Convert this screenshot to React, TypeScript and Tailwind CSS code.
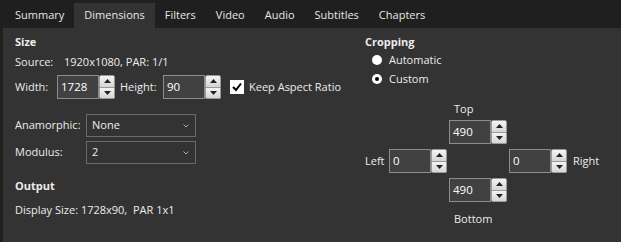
import React from 'react';

const tabs = ['Summary', 'Dimensions', 'Filters', 'Video', 'Audio', 'Subtitles', 'Chapters'];

const Arrow: React.FC<{ up?: boolean }> = ({ up }) => (
    <svg width="7" height="4" viewBox="0 0 7 4" className="block">
        <path d={up ? 'M0 4 L3.5 0 L7 4 Z' : 'M0 0 L3.5 4 L7 0 Z'} fill="#222" />
    </svg>
);

const Spin: React.FC<{ value: string }> = ({ value }) => (
    <div className="flex items-stretch h-[24px]">
        <div className="w-[42px] bg-[#414141] border border-[#8c8c8c] text-white text-[11.5px] pl-[3px] flex items-center">{value}</div>
        <div className="w-[16px] flex flex-col">
            <div className="flex-1 flex items-center justify-center bg-gradient-to-b from-[#f4f4f4] to-[#d6d6d6] border border-[#9a9a9a] rounded-t-[2px]">
                <Arrow up />
            </div>
            <div className="flex-1 flex items-center justify-center bg-gradient-to-b from-[#f4f4f4] to-[#d6d6d6] border border-[#9a9a9a] border-t-0 rounded-b-[2px]">
                <Arrow />
            </div>
        </div>
    </div>
);

const Select: React.FC<{ value: string }> = ({ value }) => (
    <div className="w-[110px] h-[23px] border border-[#6a6a6a] bg-[#333] flex items-center justify-between pl-[5px] pr-[6px] text-[#eee]">
        <span>{value}</span>
        <svg width="6" height="4" viewBox="0 0 6 4"><path d="M0.5 0.5 L3 3 L5.5 0.5" stroke="#aaa" strokeWidth="1" fill="none" /></svg>
    </div>
);

const App: React.FC = () => {
    return (
        <div className="w-[621px] h-[242px] bg-[#1f1f1f] text-[#ececec] text-[11px] flex flex-col overflow-hidden" style={{ fontFamily: '"Open Sans", "Noto Sans", sans-serif' }}>
            {/* tab strip */}
            <div className="h-[28px] flex items-end pl-[5px]">
                {tabs.map((t) => (
                    <div
                        key={t}
                        className={`h-[25px] px-[10px] flex items-center text-[#e6e6e6] ${t === 'Dimensions' ? 'bg-[#333]' : ''}`}
                    >
                        {t}
                    </div>
                ))}
            </div>

            {/* panel */}
            <div className="flex-1 ml-[3px] bg-[#333] flex pl-[12px] pt-[6px]">
                {/* left column */}
                <div className="w-[350px] flex flex-col">
                    <div className="font-bold leading-[16px]">Size</div>
                    <div className="flex mt-[4px] leading-[16px]">
                        <span className="w-[49px]">Source:</span>
                        <span>1920x1080, PAR: 1/1</span>
                    </div>
                    <div className="flex items-center mt-[5px]">
                        <span className="w-[42px]">Width:</span>
                        <Spin value="1728" />
                        <span className="ml-[5px] w-[43px]">Height:</span>
                        <Spin value="90" />
                        <div className="ml-[9px] w-[14px] h-[14px] bg-white flex items-center justify-center">
                            <svg width="10" height="10" viewBox="0 0 10 10"><path d="M1 5 L4 8 L9 1.5" stroke="#000" strokeWidth="2" fill="none" /></svg>
                        </div>
                        <span className="ml-[5px]">Keep Aspect Ratio</span>
                    </div>
                    <div className="flex items-center mt-[15px]">
                        <span className="w-[71px]">Anamorphic:</span>
                        <Select value="None" />
                    </div>
                    <div className="flex items-center mt-[4px]">
                        <span className="w-[71px]">Modulus:</span>
                        <Select value="2" />
                    </div>
                    <div className="font-bold leading-[16px] mt-[14px]">Output</div>
                    <div className="leading-[16px] mt-[8px]">Display Size: 1728x90,&nbsp; PAR 1x1</div>
                </div>

                {/* right column */}
                <div className="flex flex-col">
                    <div className="font-bold leading-[16px]">Cropping</div>
                    <div className="flex items-center mt-[2px] ml-[7px] leading-[16px]">
                        <span className="w-[10px] h-[10px] rounded-full bg-white" />
                        <span className="ml-[7px]">Automatic</span>
                    </div>
                    <div className="flex items-center mt-[3px] ml-[7px] leading-[16px]">
                        <span className="w-[10px] h-[10px] rounded-full bg-white flex items-center justify-center">
                            <span className="w-[4px] h-[4px] rounded-full bg-black" />
                        </span>
                        <span className="ml-[7px]">Custom</span>
                    </div>

                    <div className="grid grid-cols-[84px_60px_auto] mt-[14px]">
                        <div />
                        <div className="pl-[5px] leading-[16px]">Top</div>
                        <div />

                        <div />
                        <div className="mt-[3px]"><Spin value="490" /></div>
                        <div />

                        <div className="flex items-center mt-[5px]">
                            <span className="w-[24px]">Left</span>
                            <Spin value="0" />
                        </div>
                        <div />
                        <div className="flex items-center mt-[5px]">
                            <Spin value="0" />
                            <span className="ml-[6px]">Right</span>
                        </div>

                        <div />
                        <div className="mt-[5px]"><Spin value="490" /></div>
                        <div />

                        <div />
                        <div className="pl-[5px] mt-[9px] leading-[16px]">Bottom</div>
                        <div />
                    </div>
                </div>
            </div>
        </div>
    );
};

export default App;
